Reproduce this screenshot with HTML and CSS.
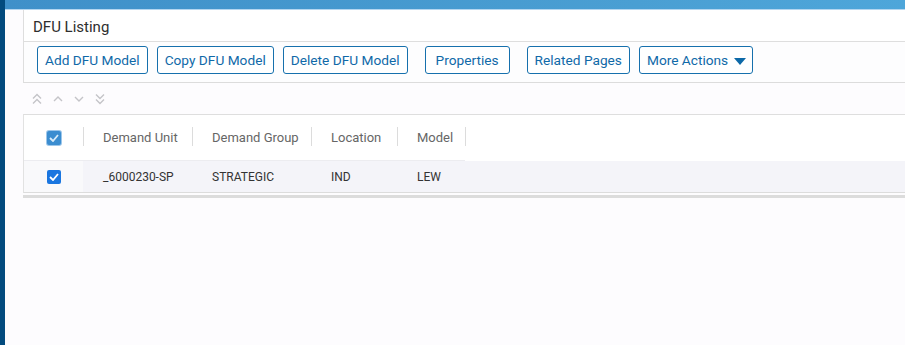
FILE: index.html
```html
<!DOCTYPE html>
<html lang="en">
<head>
    <meta charset="UTF-8">
    <meta name="viewport" content="width=device-width, initial-scale=1.0">
    <title>DFU Listing</title>
    <link rel="stylesheet" href="styles.css">
</head>
<body>
<div class="app">
    <div class="sidebar"></div>
    <div class="main">
        <div class="topbar"></div>
        <div class="content">
            <!-- Title and action buttons -->
            <div class="panel">
                <div class="panel-title">DFU Listing</div>
                <div class="toolbar">
                    <button class="btn">Add DFU Model</button>
                    <button class="btn">Copy DFU Model</button>
                    <button class="btn">Delete DFU Model</button>
                    <button class="btn btn-wide-gap btn-roomy">Properties</button>
                    <button class="btn btn-wide-gap">Related Pages</button>
                    <button class="btn btn-menu">More Actions <span class="caret"></span></button>
                </div>
            </div>

            <!-- Row move arrows -->
            <div class="sorters">
                <svg width="10" height="12" viewBox="0 0 10 12"><path d="M1 5.5 L5 1.5 L9 5.5 M1 10.5 L5 6.5 L9 10.5" fill="none" stroke="#c4c4c8" stroke-width="1.4"/></svg>
                <svg width="10" height="12" viewBox="0 0 10 12"><path d="M1 8 L5 4 L9 8" fill="none" stroke="#c4c4c8" stroke-width="1.4"/></svg>
                <svg width="10" height="12" viewBox="0 0 10 12"><path d="M1 4 L5 8 L9 4" fill="none" stroke="#c4c4c8" stroke-width="1.4"/></svg>
                <svg width="10" height="12" viewBox="0 0 10 12"><path d="M1 1.5 L5 5.5 L9 1.5 M1 6.5 L5 10.5 L9 6.5" fill="none" stroke="#c4c4c8" stroke-width="1.4"/></svg>
            </div>

            <!-- Listing grid -->
            <div class="grid">
                <div class="hcell check-cell"><span class="checkbox checkbox-head"><svg width="10" height="8" viewBox="0 0 10 8"><path d="M1 4 L4 7 L9 1" fill="none" stroke="#d8ecfa" stroke-width="1.8"/></svg></span></div>
                <div class="hcell sep">Demand Unit</div>
                <div class="hcell sep">Demand Group</div>
                <div class="hcell sep">Location</div>
                <div class="hcell sep">Model</div>
                <div class="hcell sep filler"></div>

                <div class="cell check-cell row-check"><span class="checkbox"><svg width="10" height="8" viewBox="0 0 10 8"><path d="M1 4 L4 7 L9 1" fill="none" stroke="#fff" stroke-width="1.8"/></svg></span></div>
                <div class="cell">_6000230-SP</div>
                <div class="cell">STRATEGIC</div>
                <div class="cell">IND</div>
                <div class="cell">LEW</div>
                <div class="cell"></div>
            </div>
            <div class="grid-foot"></div>
        </div>
    </div>
</div>
</body>
</html>
```

FILE: styles.css
```css
body {
    margin: 0;
    background-color: #fdfcfe;
    font-family: Roboto, "Liberation Sans", sans-serif;
    color: #333;
}
.app {
    display: flex;
    min-height: 345px;
}
.sidebar {
    width: 5px;
    background-color: #034b7e;
    flex-shrink: 0;
}
.main {
    flex: 1;
    min-width: 0;
}
.topbar {
    height: 9px;
    background: linear-gradient(to right, #3f90c9, #4a9fd3 70%, #4ea6da);
    border-bottom: 1px solid #b4d6f0;
}
.content {
    padding-left: 18px;
}

.panel {
    border-left: 1px solid #dedede;
    border-bottom: 1px solid #dcdcdc;
    background-color: #fff;
}
.panel-title {
    height: 28px;
    padding: 3px 0 0 9px;
    line-height: 28px;
    font-size: 15px;
    color: #2e2e2e;
    border-bottom: 1px solid #dedede;
}
.toolbar {
    display: flex;
    gap: 9px;
    padding: 4px 13px 8px 13px;
    background-color: #fdfdfe;
}
.btn {
    height: 28px;
    padding: 0 7px;
    border: 1px solid #1670ad;
    border-radius: 3px;
    background-color: #fff;
    color: #1069a8;
    font-family: Roboto, "Liberation Sans", sans-serif;
    font-size: 13.7px;
    display: flex;
    align-items: center;
    gap: 6px;
    cursor: pointer;
}
.btn-wide-gap {
    margin-left: 8px;
}
.btn-roomy {
    padding: 0 10px;
}
.btn-menu {
    padding-right: 6px;
}
.caret {
    width: 0;
    height: 0;
    border-left: 6px solid transparent;
    border-right: 6px solid transparent;
    border-top: 7px solid #0d69a8;
    margin-top: 2px;
}

.sorters {
    height: 31px;
    display: flex;
    align-items: center;
    gap: 11px;
    padding-left: 9px;
}

.grid {
    display: grid;
    grid-template-columns: 59px 109px 119px 86px 68px 1fr;
    border-top: 1px solid #dedede;
    border-left: 1px solid #e2e2e2;
    border-bottom: 1px solid #dcdcdc;
}
.hcell {
    box-sizing: border-box;
    height: 46px;
    display: flex;
    align-items: center;
    padding-left: 20px;
    font-size: 13px;
    color: #666;
    background-color: #fff;
    border-bottom: 1px solid #ececf0;
    position: relative;
}
.hcell.filler {
    border-bottom-color: transparent;
}
.sep::before {
    content: "";
    position: absolute;
    left: 0;
    top: 12px;
    height: 19px;
    border-left: 1px solid #dcdcdc;
}
.check-cell {
    padding-left: 0;
    justify-content: center;
}
.cell {
    height: 31px;
    display: flex;
    align-items: center;
    padding-left: 20px;
    font-size: 12px;
    color: #333;
    background-color: #f4f4f9;
}
.row-check {
    padding-left: 0;
    background-color: #f9f9fb;
}
.checkbox {
    width: 14px;
    height: 14px;
    border-radius: 2px;
    background-color: #1a76e0;
    display: flex;
    align-items: center;
    justify-content: center;
}
.checkbox-head {
    background-color: #3b8dd0;
    box-shadow: 0 0 0 1px #9cc6ea;
}
.grid-foot {
    height: 3px;
    margin-top: 2px;
    background-color: #dcdcdc;
}
```
